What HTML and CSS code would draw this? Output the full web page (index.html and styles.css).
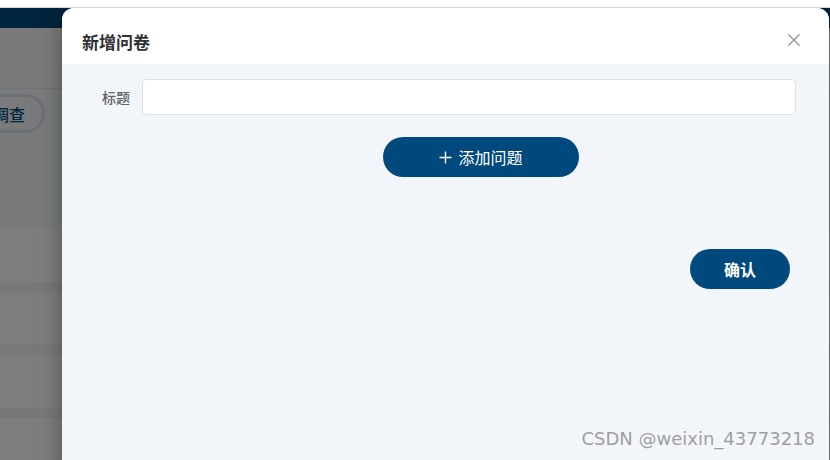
FILE: index.html
```html
<!DOCTYPE html>
<html lang="zh-CN">
<head>
<meta charset="utf-8">
<title>新增问卷</title>
<link rel="stylesheet" href="styles.css">
</head>
<body>
<div class="topstrip"></div>
<div class="viewport">
  <div class="page">
    <div class="page-header"></div>
    <div class="toolbar"></div>
    <div class="filters">
      <span class="pill">调查</span>
    </div>
    <div class="row"></div>
    <div class="sep"></div>
    <div class="row"></div>
    <div class="sep"></div>
    <div class="row"></div>
    <div class="sep"></div>
    <div class="row"></div>
  </div>
  <div class="mask"></div>
  <div class="dialog">
    <div class="dialog-header">
      <span class="dialog-title">新增问卷</span>
      <button class="dialog-close" aria-label="关闭">
        <svg width="12" height="12" viewBox="0 0 12 12"><path d="M0.5 0.5 L11.5 11.5 M11.5 0.5 L0.5 11.5" stroke="#8a8f99" stroke-width="1.2" fill="none"/></svg>
      </button>
    </div>
    <div class="dialog-body">
      <div class="form-item">
        <label class="form-label">标题</label>
        <input class="form-input" type="text">
      </div>
      <div class="add-row">
        <button class="btn btn-add">
          <svg width="13" height="13" viewBox="0 0 13 13"><path d="M6.5 0.5 V12.5 M0.5 6.5 H12.5" stroke="#fff" stroke-width="1.4" fill="none"/></svg>
          <span>添加问题</span>
        </button>
      </div>
      <div class="footer-row">
        <button class="btn btn-confirm">确认</button>
      </div>
    </div>
  </div>
  <div class="watermark">CSDN @weixin_43773218</div>
</div>
</body>
</html>
```
FILE: styles.css
```css
* { box-sizing: border-box; }
html, body {
  margin: 0;
  padding: 0;
  width: 830px;
  height: 460px;
  overflow: hidden;
  background: #fff;
  font-family: "Noto Sans CJK SC", "Noto Sans", sans-serif;
}
.topstrip {
  height: 8px;
  background: #fff;
  border-bottom: 1px solid #d6d6d6;
}
.viewport {
  position: relative;
  height: 452px;
  overflow: hidden;
}
.page {
  background: #fafafa;
  height: 100%;
}
.page-header {
  height: 20px;
  background: #004a7c;
}
.toolbar {
  height: 61px;
  background: #f4f4f4;
  border-bottom: 1px solid #e2e2e2;
}
.filters {
  height: 140px;
  background: #f2f5f9;
  padding-top: 5px;
}
.pill {
  display: inline-flex;
  align-items: center;
  height: 39px;
  margin-left: -50px;
  padding: 0 17px 0 40px;
  border: 3px solid #d8e0ea;
  border-radius: 20px;
  color: #004a7c;
  font-size: 16px;
  font-weight: 500;
}
.row {
  height: 53px;
  background: #fbfbfb;
}
.sep {
  height: 10px;
  background: #eef1f5;
}
.mask {
  position: absolute;
  inset: 0;
  background: rgba(0, 0, 0, 0.5);
}
.dialog {
  position: absolute;
  left: 62px;
  top: 0;
  width: 767px;
  height: 470px;
  border-radius: 12px 12px 0 0;
  background: #f2f6fa;
  box-shadow: 0 0 22px rgba(0, 0, 0, 0.35);
  overflow: hidden;
}
.dialog-header {
  position: relative;
  height: 56px;
  background: #fff;
  padding: 24px 20px 12px;
}
.dialog-title {
  display: block;
  font-size: 17px;
  line-height: 20px;
  font-weight: 700;
  color: #303133;
}
.dialog-close {
  position: absolute;
  top: 26px;
  right: 29px;
  width: 12px;
  height: 12px;
  padding: 0;
  border: 0;
  background: none;
  display: flex;
}
.dialog-body {
  padding: 15px 33px 0 20px;
}
.form-item {
  display: flex;
  align-items: center;
}
.form-label {
  width: 60px;
  padding-right: 12px;
  text-align: right;
  font-size: 14px;
  color: #606266;
  font-weight: 500;
}
.form-input {
  flex: 1;
  height: 36px;
  border: 1px solid #dcdfe6;
  border-radius: 4px;
  background: #fff;
  outline: none;
}
.add-row {
  display: flex;
  padding-left: 301px;
  margin-top: 22px;
}
.btn {
  border: 0;
  border-radius: 20px;
  background: #00497d;
  color: #fff;
  font-family: "Noto Sans CJK SC", "Noto Sans", sans-serif;
  height: 40px;
  display: inline-flex;
  align-items: center;
  justify-content: center;
  padding: 0;
}
.btn-add {
  width: 196px;
  gap: 6px;
  font-size: 16px;
}
.btn-confirm {
  width: 100px;
  font-size: 16px;
  font-weight: 700;
}
.footer-row {
  display: flex;
  justify-content: flex-end;
  margin-top: 72px;
  margin-right: 6px;
}
.watermark {
  position: absolute;
  right: 15px;
  top: 421px;
  font-family: "DejaVu Sans", sans-serif;
  font-size: 18px;
  line-height: 20px;
  color: #9d9d9d;
  text-shadow: 0 0 1px #fff;
}
```
